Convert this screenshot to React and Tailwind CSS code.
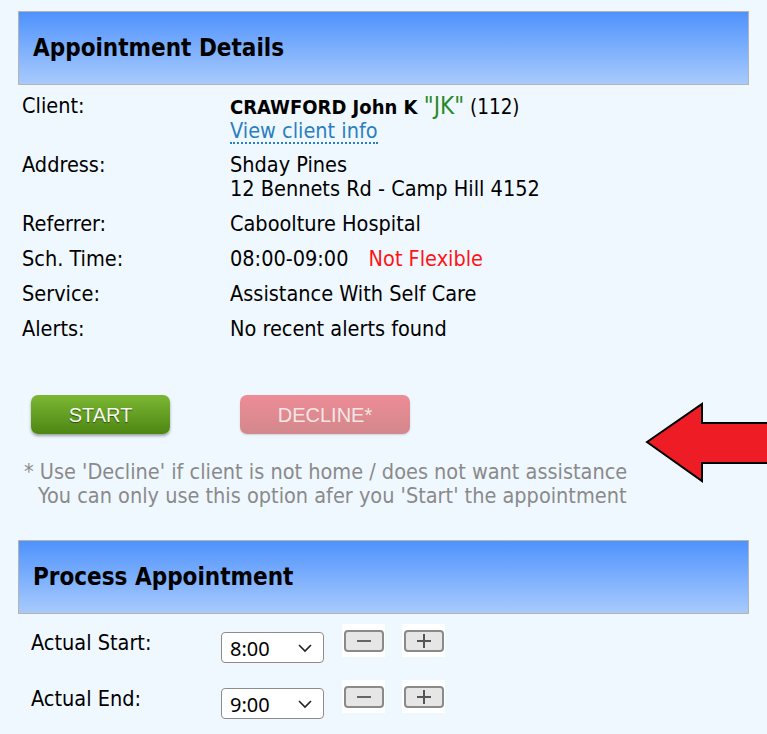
import React from "react";

function Header({ title }) {
  return (
    <div className="mx-[18px] h-[74px] border border-[#b4b4b4] bg-gradient-to-b from-[#4e92fc] to-[#a8cafc] flex items-center pl-[14px]">
      <h2 className="text-[24px] font-bold text-black" style={{ fontFamily: '"DejaVu Sans Condensed", "DejaVu Sans", sans-serif' }}>
        {title}
      </h2>
    </div>
  );
}

function Row({ label, children, className = "" }) {
  return (
    <div className={"flex " + className}>
      <div className="w-[208px] shrink-0">{label}</div>
      <div>{children}</div>
    </div>
  );
}

function StepBtn({ children }) {
  return (
    <div className="w-[43px] h-[33px] bg-white flex items-center justify-center">
      <div className="w-[40px] h-[22px] rounded-[4px] border-2 border-[#8a8a8a] bg-[#e6e6e6] flex items-center justify-center text-[#555]">
        {children}
      </div>
    </div>
  );
}

function TimeRow({ label, value }) {
  return (
    <div className="flex items-start h-[56px]">
      <div className="w-[190px] leading-[24px] -mt-[1px]">{label}</div>
      <div className="w-[103px] h-[31px] bg-white border border-[#8c8c8c] rounded-[4px] flex items-center justify-between pl-[8px] pr-[10px] text-[20px]" style={{ fontFamily: '"Noto Sans", sans-serif' }}>
        <span className="pt-[2px]">{value}</span>
        <svg width="16" height="10" viewBox="0 0 16 10"><path d="M2 2 L8 8 L14 2" fill="none" stroke="#222" strokeWidth="1.6" /></svg>
      </div>
      <div className="ml-[18px] flex gap-[17px] -mt-[8px]">
        <StepBtn>
          <svg width="16" height="4" viewBox="0 0 16 4"><rect x="1" y="1" width="14" height="2" fill="#666" /></svg>
        </StepBtn>
        <StepBtn>
          <svg width="16" height="16" viewBox="0 0 16 16"><rect x="1" y="7" width="14" height="2" fill="#555" /><rect x="7" y="1" width="2" height="14" fill="#555" /></svg>
        </StepBtn>
      </div>
    </div>
  );
}

export default function App() {
  const font = { fontFamily: '"DejaVu Sans Condensed", "DejaVu Sans", sans-serif' };
  return (
    <div className="relative w-[767px] h-[734px] overflow-hidden bg-[#f0f8ff] pt-[11px] text-[21.5px] text-black" style={font}>
      <Header title="Appointment Details" />
      <div className="pl-[22px] pt-[9px] leading-[24px]">
        <Row label="Client:" className="h-[59px]">
          <div>
            <span className="font-bold text-[20px]">CRAWFORD John K </span>
            <span className="text-[#2a8a2a] text-[24px]">"JK"</span>
            <span className="text-[20.5px]"> (112)</span>
          </div>
          <a className="text-[#2a7fbf] border-b-2 border-dotted border-[#2a7fbf] leading-[22px] inline-block">View client info</a>
        </Row>
        <Row label="Address:" className="h-[59px]">
          <div>Shday Pines</div>
          <div>12 Bennets Rd - Camp Hill 4152</div>
        </Row>
        <Row label="Referrer:" className="h-[35px]">Caboolture Hospital</Row>
        <Row label="Sch. Time:" className="h-[35px]">
          08:00-09:00 <span className="ml-[14px] text-[#ff1414]">Not Flexible</span>
        </Row>
        <Row label="Service:" className="h-[35px]">Assistance With Self Care</Row>
        <Row label="Alerts:" className="h-[35px]">No recent alerts found</Row>
      </div>

      <div className="flex pl-[31px] mt-[43px] gap-[70px]" style={{ fontFamily: '"Liberation Sans", Arial, sans-serif' }}>
        <button className="w-[139px] h-[39px] rounded-[7px] bg-gradient-to-b from-[#7cb733] to-[#4d8712] text-[#f4f8e8] text-[20px] shadow-[0_2px_3px_rgba(0,0,0,0.35)] [text-shadow:0_1px_1px_rgba(0,0,0,0.5)]">
          START
        </button>
        <button className="w-[170px] h-[39px] rounded-[7px] bg-gradient-to-b from-[#ee8c96] to-[#d2888c] text-[#f5e6e6] text-[20px] shadow-[0_1px_2px_rgba(0,0,0,0.15)]">
          DECLINE*
        </button>
      </div>

      <div className="pl-[24px] mt-[26px] text-[#8a8a8a] leading-[24px]">
        <div>* Use 'Decline' if client is not home / does not want assistance</div>
        <div className="pl-[14px]">You can only use this option afer you 'Start' the appointment</div>
      </div>

      <div className="mt-[32px]">
        <Header title="Process Appointment" />
      </div>
      <div className="pl-[31px] pt-[18px]">
        <TimeRow label="Actual Start:" value="8:00" />
        <TimeRow label="Actual End:" value="9:00" />
      </div>

      <svg className="absolute left-[645px] top-[402px]" width="124" height="81" viewBox="645 402 124 81">
        <polygon points="647,442 702,404 702,423 770,423 770,463 702,463 702,481" fill="#ee1c24" stroke="#000" strokeWidth="2" strokeLinejoin="miter" />
      </svg>
    </div>
  );
}
